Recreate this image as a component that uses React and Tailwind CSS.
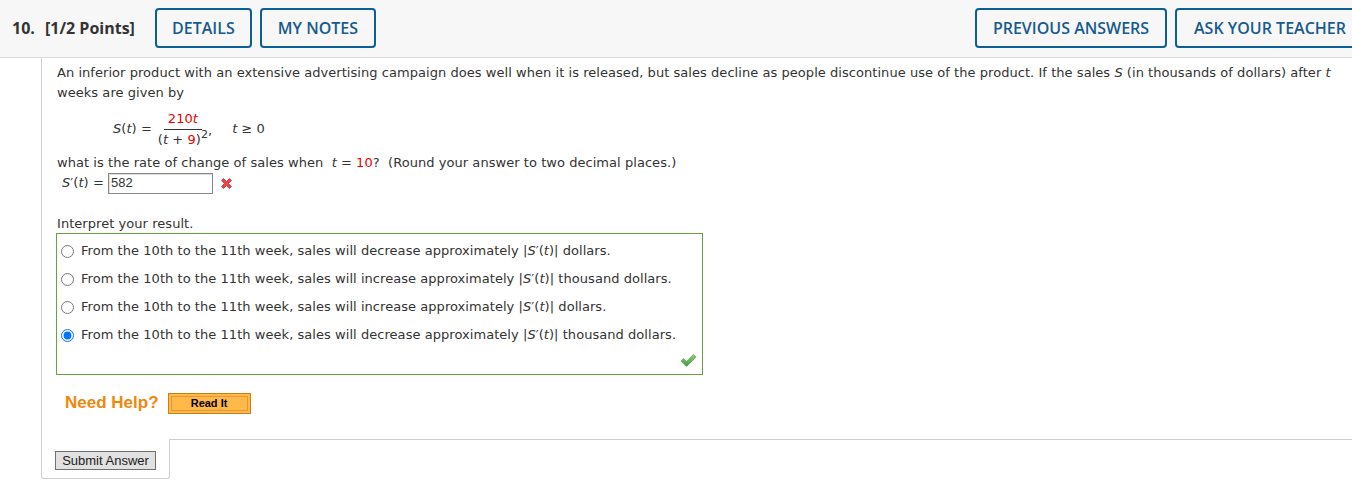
import React from "react";

const HeaderButton = ({ children, className = "" }) => (
  <div
    className={`h-[40px] shrink-0 flex items-center justify-center rounded-[4px] border-2 border-[#0b5f97] text-[#175b8c] text-[16px] font-semibold ${className}`}
  >
    {children}
  </div>
);

const SPrime = () => (
  <span>
    |<i>S</i>′(<i>t</i>)|
  </span>
);

const options = [
  ["decrease", "dollars."],
  ["increase", "thousand dollars."],
  ["increase", "dollars."],
  ["decrease", "thousand dollars."],
];

const App = () => {
  return (
    <div className="w-[1352px] h-[498px] overflow-hidden bg-white text-[#333]">
      {/* header */}
      <div
        className="h-[58px] bg-[#f7f7f7] border-b border-[#dcdcdc] flex items-start pt-[8px]"
        style={{ fontFamily: '"Open Sans", sans-serif' }}
      >
        <div className="flex items-center h-[40px] text-[16px] font-bold text-[#333] pl-[12px]">
          <span className="w-[33px]">10.</span>
          <span>[1/2 Points]</span>
        </div>
        <HeaderButton className="ml-[20px] w-[97px]">DETAILS</HeaderButton>
        <HeaderButton className="ml-[8px] w-[116px]">MY NOTES</HeaderButton>
        <HeaderButton className="ml-auto w-[192px]">PREVIOUS ANSWERS</HeaderButton>
        <HeaderButton className="ml-[8px] w-[190px] -mr-[13px]">ASK YOUR TEACHER</HeaderButton>
      </div>

      {/* question body */}
      <div
        className="ml-[41px] border-l border-[#cfcfcf] pl-[15px] pt-[5px] pb-[26px] text-[13px] leading-[20px] tracking-[0.05px]"
        style={{ fontFamily: '"DejaVu Sans", Verdana, sans-serif' }}
      >
        <p>
          An inferior product with an extensive advertising campaign does well when it is released, but sales decline as people discontinue use of the product. If the sales <i>S</i> (in thousands of dollars) after <i>t</i> weeks are given by
        </p>

        <div className="flex items-center h-[44px] mt-[4px] pl-[56px]">
          <span>
            <i>S</i>(<i>t</i>) =
          </span>
          <div className="flex flex-col items-center ml-[6px] leading-[20px]">
            <span className="border-b border-[#333] px-[4px] text-[#e00]">
              210<i>t</i>
            </span>
            <span>
              (<i>t</i> + <span className="text-[#e00]">9</span>)<sup className="text-[11px]">2</sup>
            </span>
          </div>
          <span className="self-end mb-[10px]">,</span>
          <span className="ml-[20px]">
            <i>t</i> ≥ 0
          </span>
        </div>

        <p className="mt-[2px]">
          what is the rate of change of sales when&nbsp; <i>t</i> = <span className="text-[#e00]">10</span>?&nbsp; (Round your answer to two decimal places.)
        </p>

        <div className="flex items-center h-[22px] mt-[-1px] pl-[5px]">
          <span>
            <i>S</i>′(<i>t</i>) =&nbsp;
          </span>
          <div
            className="w-[105px] h-[21px] border border-[#888] shadow-[inset_1px_1px_0_#ddd] flex items-center px-[2px] text-[13px] tracking-normal"
            style={{ fontFamily: '"Liberation Sans", Arial, sans-serif' }}
          >
            582
          </div>
          <svg className="ml-[6px]" width="15" height="15" viewBox="0 0 15 15">
            <path
              d="M2.5 4.5 L4.5 2.5 L7.5 5.5 L10.5 2.5 L12.5 4.5 L9.5 7.5 L12.5 10.5 L10.5 12.5 L7.5 9.5 L4.5 12.5 L2.5 10.5 L5.5 7.5 Z"
              fill="#e84848"
              stroke="#c62828"
              strokeWidth="0.8"
              strokeLinejoin="round"
            />
          </svg>
        </div>

        <p className="mt-[20px]">Interpret your result.</p>

        <div className="w-[647px] h-[142px] border border-[#64a83c] mt-[-1px] -ml-[1px] pt-[3px] relative">
          {options.map(([dir, unit], i) => (
            <label key={i} className="flex items-center h-[28px] pl-[4px]">
              <input
                type="radio"
                name="interp"
                readOnly
                checked={i === 3}
                className="w-[13px] h-[13px] m-0 accent-[#0075ff]"
              />
              <span className="ml-[7px]">
                From the 10th to the 11th week, sales will {dir} approximately <SPrime /> {unit}
              </span>
            </label>
          ))}
          <svg className="absolute right-[5px] bottom-[6px]" width="17" height="15" viewBox="0 0 17 15">
            <defs>
              <linearGradient id="ck" x1="0" y1="0" x2="0" y2="1">
                <stop offset="0" stopColor="#8fd07a" />
                <stop offset="1" stopColor="#3e9a3a" />
              </linearGradient>
            </defs>
            <path
              d="M1 8 L3.5 5.5 L6.5 8.5 L13.5 1.5 L16 4 L6.5 13.5 Z"
              fill="url(#ck)"
              stroke="#4a9a44"
              strokeWidth="0.6"
              strokeLinejoin="round"
            />
          </svg>
        </div>

        <div className="flex items-center h-[20px] mt-[18px] pl-[8px] tracking-normal" style={{ fontFamily: '"Liberation Sans", Arial, sans-serif' }}>
          <span className="text-[17px] font-bold text-[#f0880a]">Need Help?</span>
          <div className="ml-[9px] w-[83px] h-[21px] border border-[#d57b14] bg-[#ffb948] p-[2px]">
            <div className="h-full border border-[#e7973a] flex items-center justify-center text-[11px] font-bold text-black leading-none">
              Read It
            </div>
          </div>
        </div>
      </div>

      {/* footer tab */}
      <div className="flex ml-[41px]">
        <div className="w-[129px] h-[40px] border-l border-r border-b border-[#cfcfcf] rounded-b-[3px] pl-[13px] pt-[12px]">
          <div
            className="w-[101px] h-[19px] bg-[#e1e1e1] border border-[#707070] flex items-center justify-center text-[13px] text-[#222]"
            style={{ fontFamily: '"Liberation Sans", Arial, sans-serif' }}
          >
            Submit Answer
          </div>
        </div>
        <div className="flex-1 border-t border-[#cfcfcf]" />
      </div>
    </div>
  );
};

export default App;
